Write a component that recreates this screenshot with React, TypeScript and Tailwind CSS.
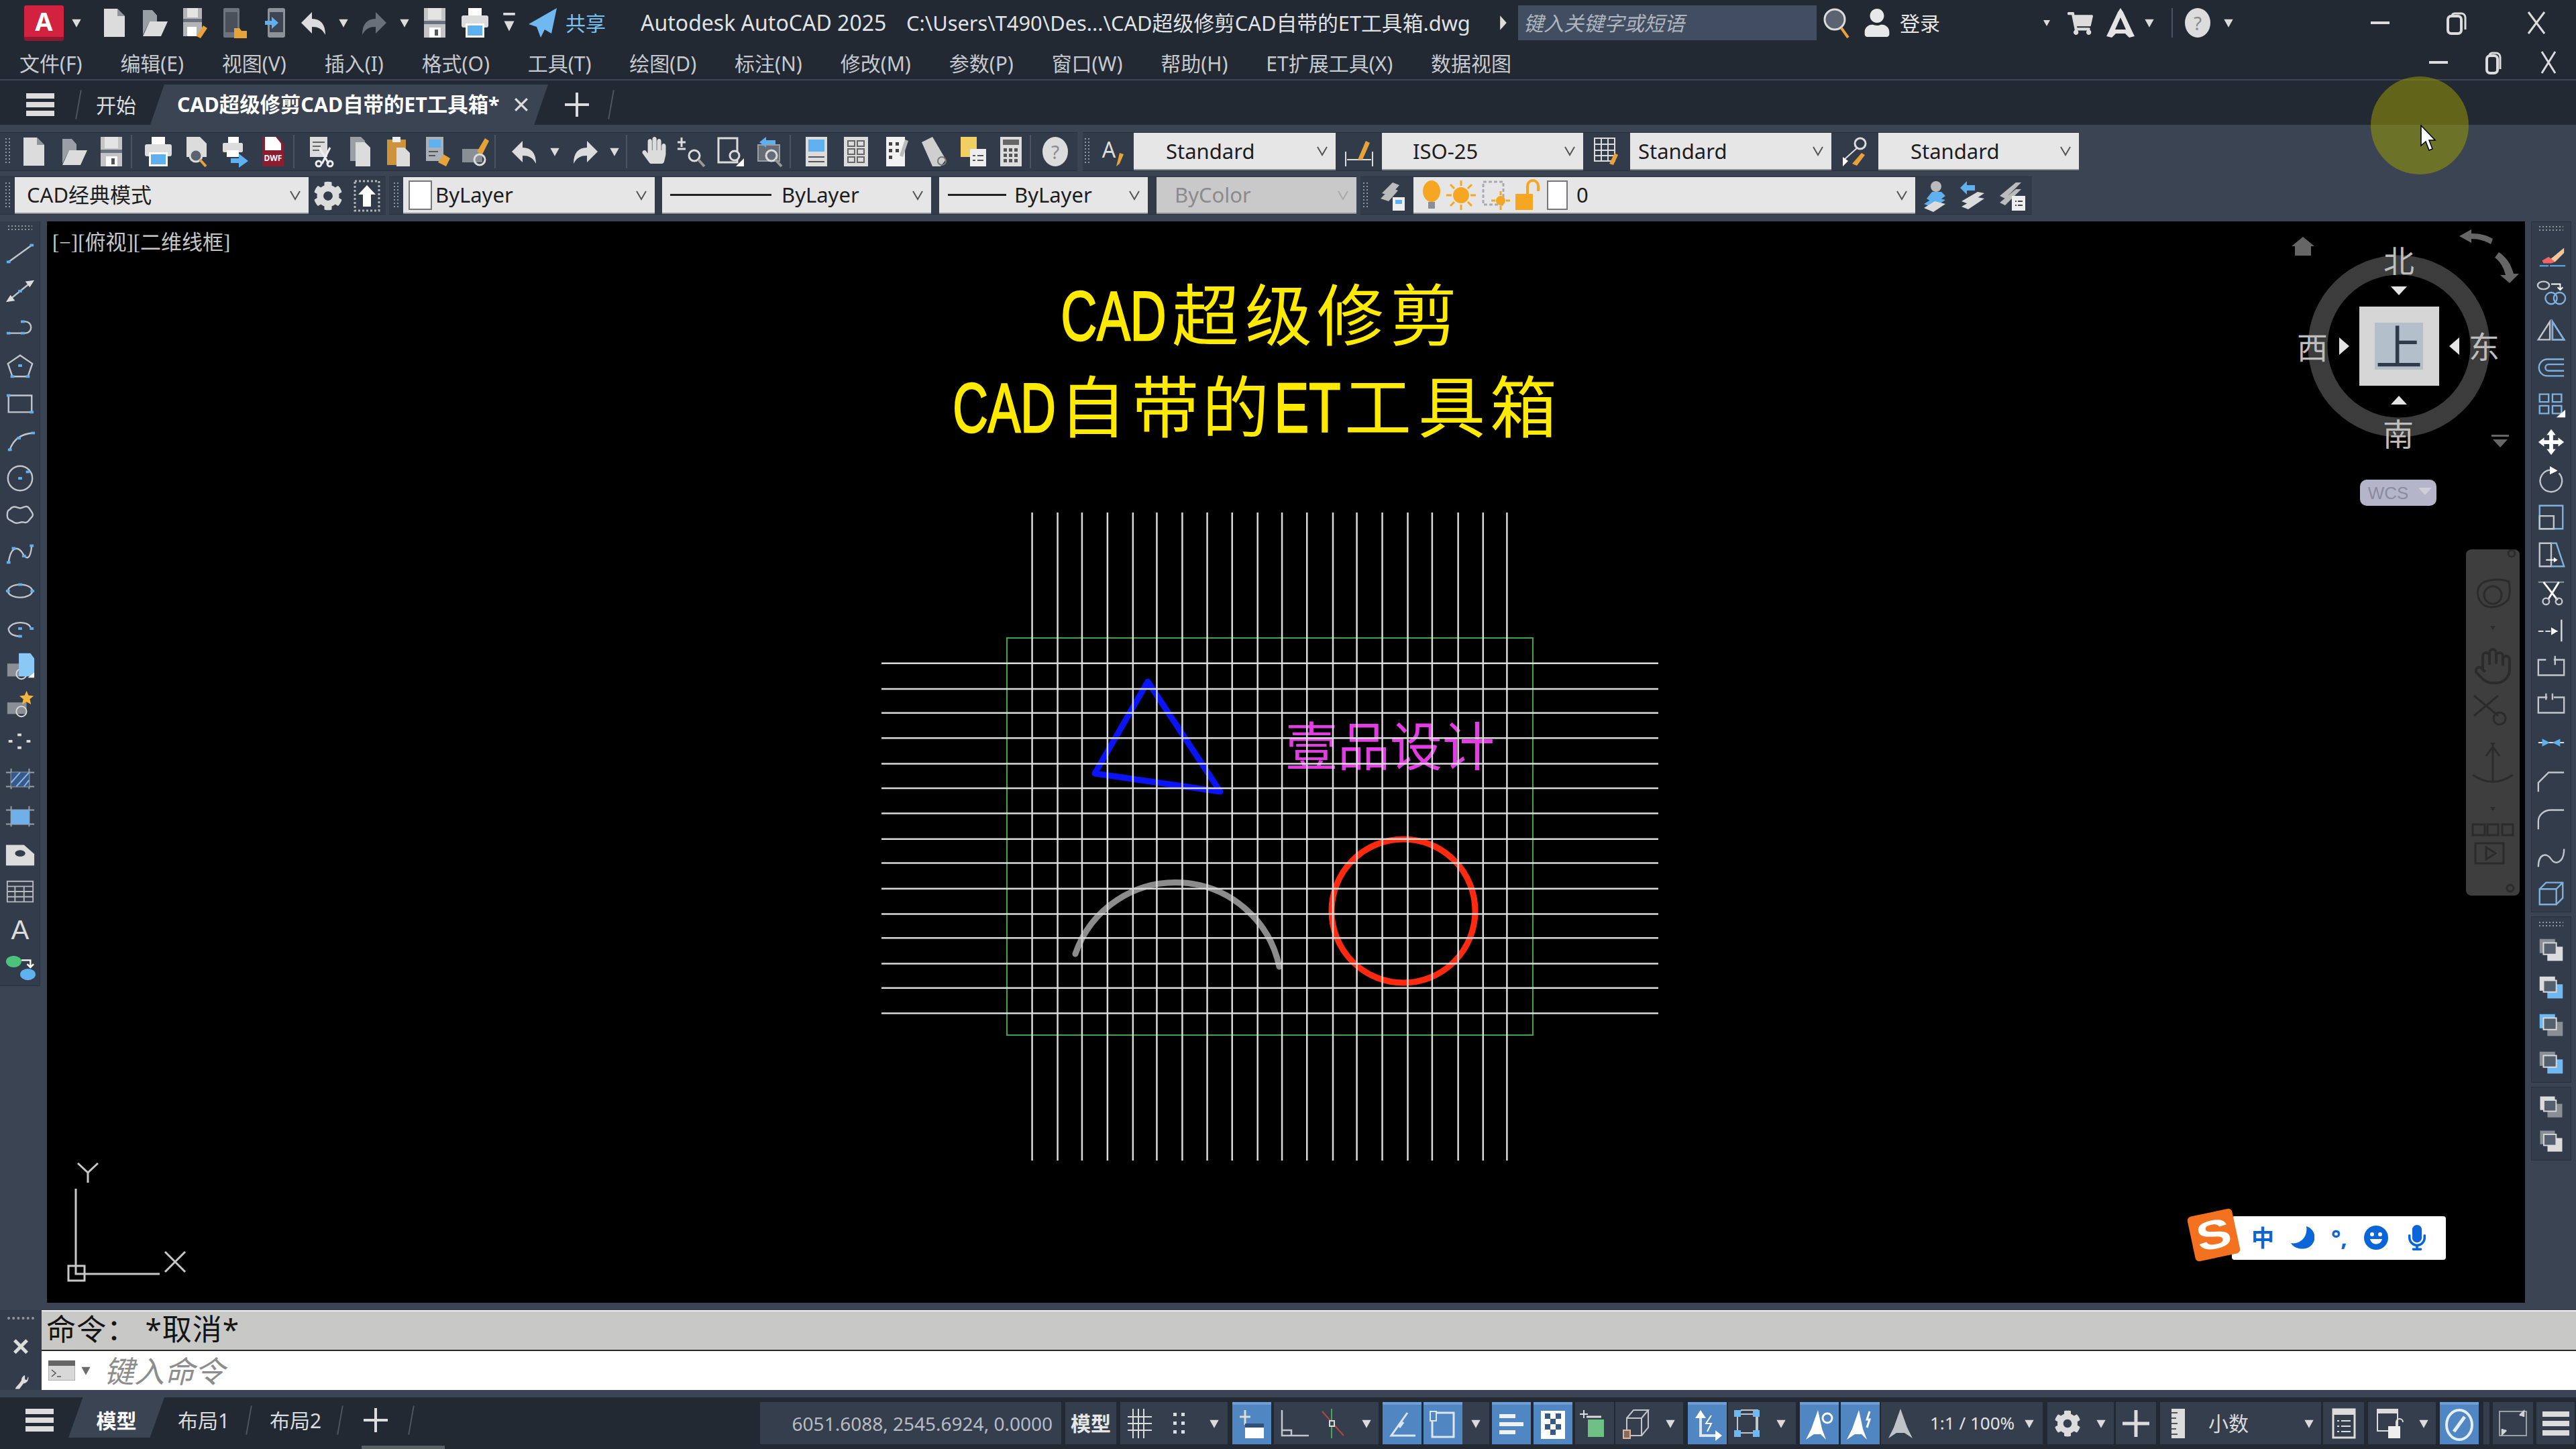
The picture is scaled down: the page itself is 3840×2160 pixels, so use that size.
import type { ReactNode } from "react";
import { Hand } from "lucide-react";
import { FaCog, FaHandPaper, FaMicrophone, FaShoppingCart, FaUser } from "react-icons/fa";

const G = "#dcdcdc";
const M = "#9a9fa6";
const B = "#5fb0ee";
const O = "#e8a23a";
const L = "#c2c6cb";

function Ic({ children, s = "w-[48px] h-[48px]" }: { children: ReactNode; s?: string }) {
  return (
    <svg viewBox="0 0 48 48" className={`${s} shrink-0`}>
      {children}
    </svg>
  );
}

function C({ i, w = "w-[58px]", cls = "" }: { i?: ReactNode; w?: string; cls?: string }) {
  return <div className={`flex items-center justify-center shrink-0 h-full ${w} ${cls}`}>{i && <Ic>{i}</Ic>}</div>;
}

function Tri({ w = "w-[30px]", cls = "" }: { w?: string; cls?: string }) {
  return (
    <div className={`flex items-center justify-center shrink-0 h-full ${w} ${cls}`}>
      <svg viewBox="0 0 12 12" className="w-[16px] h-[16px]">
        <path d="M1 2h10L6 11z" fill={G} />
      </svg>
    </div>
  );
}

function Sep() {
  return <div className="w-[2px] h-[50px] bg-[#4a5362] shrink-0" />;
}

function Slash({ cls = "" }: { cls?: string }) {
  return <div className={`w-[2px] h-[44px] bg-[#4d5562] rotate-[10deg] shrink-0 ${cls}`} />;
}

function Burger() {
  return (
    <svg viewBox="0 0 42 34" className="w-[42px] h-[34px]">
      <path d="M0 0h42v8H0zM0 13h42v8H0zM0 26h42v8H0z" fill={G} />
    </svg>
  );
}

function Grip() {
  return (
    <svg viewBox="0 0 8 40" className="w-[8px] h-[40px] shrink-0">
      <path d="M1 0v40M6 0v40" stroke="#9097a1" strokeWidth="2" strokeDasharray="2 3" />
    </svg>
  );
}

function HGrip() {
  return (
    <div className="h-[22px] flex items-center">
      <svg viewBox="0 0 36 8" className="w-[36px] h-[8px]">
        <path d="M0 1h36M0 6h36" stroke="#9097a1" strokeWidth="2" strokeDasharray="2 3" />
      </svg>
    </div>
  );
}

function Chev({ c = "#555" }: { c?: string }) {
  return (
    <svg viewBox="0 0 20 20" className="w-[20px] h-[20px] shrink-0">
      <path d="M3 4l7 12 7-12" stroke={c} strokeWidth="2" fill="none" />
    </svg>
  );
}

const dot = (x: number, y: number) => <rect key={`${x}-${y}`} x={x - 3} y={y - 2} width="6" height="4" fill={B} />;

// top toolbar icons
const I = {
  newDoc: (<><path d="M9 3h20l11 11v31H9z" fill={G} /><path d="M29 3v11h11z" fill="#8f949b" /></>),
  open: (<><path d="M9 42V5h14l7 8v9H19z" fill={M} /><path d="M9 44l10-22h27L36 44z" fill={G} /></>),
  save: (<><rect x="8" y="2" width="32" height="44" fill="#c4c4c4" /><rect x="14" y="2" width="20" height="17" fill="#e4e4e4" /><rect x="8" y="21" width="32" height="5" fill="#6a7280" /><rect x="16" y="31" width="17" height="15" fill="#fff" /><rect x="24" y="34" width="5" height="9" fill="#555" /></>),
  saveAs: (<><rect x="8" y="2" width="28" height="42" fill="#b4b4b4" /><rect x="14" y="2" width="16" height="14" fill="#e4e4e4" /><rect x="8" y="18" width="28" height="5" fill="#6a7280" /><rect x="14" y="30" width="14" height="14" fill="#fff" /><path d="M28 44l10-16 6 4-10 15z" fill={O} /></>),
  fromWeb: (<><rect x="10" y="2" width="24" height="44" rx="2" fill="#6e747d" /><rect x="13" y="8" width="18" height="30" fill="#4a505a" /><path d="M26 32h8l3 4h8v11H26z" fill={O} /></>),
  toWeb: (<><rect x="12" y="2" width="26" height="44" rx="3" fill="#8d929a" /><rect x="15" y="8" width="20" height="30" fill="#3d4552" /><path d="M8 21h10v-6l10 9-10 9v-6H8z" fill={B} /></>),
  undo: (<path d="M20 8L4 24l16 16V30c10 0 15 3 20 12 0-16-7-24-20-24z" fill={G} />),
  undoDim: (<path d="M28 8l16 16-16 16V30C18 30 13 33 8 42c0-16 7-24 20-24z" fill="#6a707a" />),
  redo: (<path d="M28 8l16 16-16 16V30C18 30 13 33 8 42c0-16 7-24 20-24z" fill={G} />),
  print: (<><rect x="14" y="2" width="20" height="12" fill="#fff" /><rect x="4" y="13" width="40" height="18" rx="3" fill={G} /><rect x="10" y="25" width="28" height="21" fill="#fff" /><rect x="13" y="28" width="22" height="15" fill={B} /></>),
  preview: (<><path d="M8 2h20l10 10v20H8z" fill={G} /><circle cx="22" cy="30" r="9" fill="#5b6370" stroke={G} strokeWidth="3" /><path d="M28 36l9 10" stroke={O} strokeWidth="4" /></>),
  publish: (<><rect x="14" y="2" width="16" height="10" fill="#fff" /><rect x="6" y="11" width="30" height="14" rx="2" fill={G} /><rect x="12" y="22" width="18" height="10" fill="#fff" /><path d="M18 34h12v-7l14 11-14 10v-7H18z" fill={B} /></>),
  dwf: (<><path d="M8 2h22l10 10v34H8z" fill="#8c1c30" /><path d="M12 2h16l8 10v10H12z" fill="#fff" /><text x="24" y="38" fontSize="12" fontWeight="700" textAnchor="middle" fill="#fff">DWF</text></>),
  cut: (<><path d="M8 2h26v30H8z" fill={G} /><path d="M12 10h18M12 16h12M12 22h10" stroke="#666" strokeWidth="2" /><path d="M22 18l14 24M38 18L26 42" stroke="#eee" strokeWidth="3" /><circle cx="21" cy="42" r="4" fill="none" stroke="#eee" strokeWidth="3" /><circle cx="38" cy="42" r="4" fill="none" stroke="#eee" strokeWidth="3" /></>),
  copy: (<><path d="M10 2h16l6 6v30H10z" fill={M} /><path d="M18 10h14l8 8v28H18z" fill={G} /></>),
  paste: (<><rect x="8" y="6" width="28" height="38" fill={O} opacity=".85" /><rect x="16" y="2" width="12" height="8" fill="#eee" /><path d="M22 18h12l8 8v20H22z" fill={G} /></>),
  match: (<><rect x="8" y="2" width="26" height="36" fill="#aab0b8" /><rect x="12" y="6" width="18" height="12" fill={B} /><path d="M12 24h14M12 30h10" stroke="#555" strokeWidth="2" /><path d="M26 40l8-12 10 6-6 12z" fill={O} /></>),
  brush: (<><rect x="4" y="20" width="30" height="20" fill="#8a8f96" /><circle cx="30" cy="36" r="8" fill="none" stroke={G} strokeWidth="3" /><path d="M26 24L38 4l6 4-10 20z" fill={O} /></>),
  hand: <FaHandPaper x="4" y="2" size={40} color={G} />,
  zoomR: (<><path d="M8 3v14M2 10h12M2 20h12" stroke={G} strokeWidth="3" /><circle cx="27" cy="30" r="8" fill="none" stroke={G} strokeWidth="3" /><path d="M33 36l9 10" stroke="#999" strokeWidth="4" /></>),
  zoomW: (<><path d="M6 4h28v36H6z" fill="none" stroke={G} strokeWidth="3" /><circle cx="30" cy="30" r="7" fill="#3b4453" stroke={G} strokeWidth="3" /><path d="M32 46l12-12v12z" fill="#fff" /></>),
  zoomP: (<><path d="M6 14h32v24H6z" fill="#666c75" stroke={M} strokeWidth="2" /><path d="M8 10l10-8v5h14v6H18v5z" fill={B} /><circle cx="26" cy="30" r="8" fill="none" stroke={G} strokeWidth="3" /><path d="M32 36l9 10" stroke="#999" strokeWidth="4" /></>),
  props: (<><rect x="8" y="2" width="32" height="44" fill={G} /><rect x="12" y="6" width="24" height="18" fill={B} /><path d="M12 32h24M12 39h24" stroke="#555" strokeWidth="2" /></>),
  dc: (<><rect x="6" y="2" width="36" height="44" fill={G} /><path d="M12 8h10v8H12zM26 8h10v8H26zM12 20h10v8H12zM26 20h10v8H26zM12 32h10v8H12zM26 32h10v8H26z" fill="none" stroke="#666" strokeWidth="2" /></>),
  palette: (<><rect x="10" y="2" width="28" height="44" fill="#f2f2f2" /><path d="M14 10h5v5h-5zM24 10h5v5h-5zM14 20h5v5h-5zM24 20h5v5h-5zM14 30h5v5h-5z" fill="#444" /><path d="M30 30l8-24 5 2-8 24z" fill="#bbb" /></>),
  sheet: (<><path d="M6 10L22 2l20 34-8 10H22z" fill="#cfcfcf" /><circle cx="36" cy="38" r="6" fill="none" stroke="#777" strokeWidth="2" /></>),
  markup: (<><rect x="6" y="2" width="24" height="30" fill="#f2cf63" /><rect x="20" y="20" width="24" height="26" fill="#eee" /><path d="M24 30h4M24 37h4M31 30h9M31 37h9" stroke="#555" strokeWidth="2" /></>),
  calc: (<><rect x="8" y="2" width="32" height="44" fill={G} /><rect x="12" y="6" width="24" height="8" fill="#666" /><path d="M13 19h5v5h-5zM21 19h5v5h-5zM29 19h5v5h-5zM13 27h5v5h-5zM21 27h5v5h-5zM29 27h5v5h-5zM13 35h5v5h-5zM21 35h5v5h-5zM29 35h5v5h-5z" fill="#555" /></>),
  help: (<><ellipse cx="24" cy="24" rx="19" ry="22" fill={G} /><text x="24" y="35" fontSize="28" textAnchor="middle" fill="#8a8a8a">?</text></>),
  aStyle: (<><text x="18" y="33" fontSize="32" fill={G} textAnchor="middle">A</text><path d="M34 26l6 2-6 14-5 4z" fill={O} /></>),
  dimStyle: (<><path d="M4 24v22M44 24v22M6 36h36" stroke={G} strokeWidth="2" /><path d="M22 36L34 8l6 3-11 25z" fill={O} /></>),
  tableStyle: (<><path d="M6 4h30v34H6zM6 13h30M6 22h30M6 30h30M16 4v34M26 4v34" fill="none" stroke={G} strokeWidth="2" /><path d="M28 42l8-16 5 3-7 15z" fill={O} /></>),
  mleader: (<><circle cx="32" cy="12" r="8" fill="none" stroke={G} strokeWidth="3" /><path d="M28 18L8 36" stroke={G} strokeWidth="2" /><path d="M6 32l8 6-8 8z" fill="#fff" /><path d="M20 42l14-16 5 3-12 16z" fill={O} /></>),
  gear: <FaCog x="2" y="2" size={44} color={G} />,
  wsp: (<><rect x="6" y="2" width="36" height="44" fill="none" stroke="#b0b4ba" strokeWidth="3" strokeDasharray="3 3" /><path d="M24 8l13 14h-7v18H18V22h-7z" fill="#fff" /></>),
  layerProps: (<><path d="M8 20L24 4l10 4-14 16zM6 28L22 12l10 4-14 16z" fill="#bbb" /><rect x="24" y="26" width="18" height="20" fill="#eee" /><rect x="28" y="30" width="10" height="6" fill={B} /></>),
  bulb: (<><ellipse cx="24" cy="18" rx="13" ry="16" fill="#f5a623" /><rect x="19" y="34" width="10" height="10" fill="#8a8f96" /></>),
  sun: (<><circle cx="24" cy="24" r="12" fill="#f5a623" /><path d="M24 2v8M24 38v8M2 24h8M38 24h8M8 8l6 6M34 34l6 6M40 8l-6 6M14 34l-6 6" stroke="#f5a623" strokeWidth="3" /></>),
  vpSun: (<><path d="M6 4h30v34H6z" fill="none" stroke="#a7abb1" strokeWidth="3" strokeDasharray="5 3" /><circle cx="32" cy="32" r="7" fill="#f5a623" /><path d="M32 18v6M32 40v6M18 32h6M40 32h6" stroke="#f5a623" strokeWidth="3" /></>),
  lock: (<><rect x="6" y="22" width="26" height="24" fill="#f5a623" /><path d="M24 22V10a8 8 0 0 1 16 0v8" fill="none" stroke="#f5a623" strokeWidth="4" /></>),
  layerMan: (<><circle cx="26" cy="10" r="8" fill="#bbb" /><path d="M12 28l8-10h14l6 6-16 12zM8 36l16-10 16 4-18 12z" fill={B} /><path d="M8 42l16-10 16 4-18 12z" fill={G} /></>),
  layerPrev: (<><path d="M6 32l24-14 10 2-24 16zM6 40l24-14 10 2-24 16z" fill={G} /><path d="M4 12L14 2v6h12v8H14v6z" fill={B} /></>),
  layerState: (<><path d="M6 24L30 4h8L14 28zM6 34L30 14h8L14 38z" fill="#bbb" /><rect x="24" y="24" width="20" height="22" fill="#eee" /><path d="M29 32h2M29 38h2M33 32h7M33 38h7" stroke="#444" strokeWidth="2" /></>),
};

// left toolbar
const ln = { stroke: L, strokeWidth: 2.5, fill: "none" };
const left: ReactNode[] = [
  <><path d="M6 38L42 12" {...ln} />{dot(6, 38)}{dot(42, 12)}</>,
  <><path d="M8 38L40 12" {...ln} /><path d="M2 42l14-2-7-9zM46 8l-14 2 7 9z" fill={G} />{dot(24, 25)}</>,
  <><path d="M6 32H32a9 9 0 0 0 0-18h-4" {...ln} />{dot(6, 32)}{dot(28, 32)}{dot(28, 14)}</>,
  <><path d="M24 8l19 13-7 20H12L5 21z" {...ln} />{dot(24, 24)}{dot(12, 41)}{dot(36, 41)}</>,
  <><path d="M6 12h36v26H6z" {...ln} />{dot(6, 12)}{dot(42, 38)}</>,
  <><path d="M8 38Q16 14 44 12" {...ln} />{dot(8, 38)}{dot(22, 20)}{dot(44, 12)}</>,
  <><circle cx="24" cy="24" r="19" {...ln} />{dot(24, 24)}{dot(36, 14)}</>,
  <path d="M8 14c6-8 12-2 16-2s10-6 14 0 8 10 4 14-6 10-12 8-10 4-16 0-10-4-10-10 0-8 4-10z" {...ln} />,
  <><path d="M6 38C10 10 22 14 28 24s12 10 14-12" {...ln} />{dot(6, 38)}{dot(14, 16)}{dot(30, 28)}{dot(42, 12)}</>,
  <><ellipse cx="24" cy="24" rx="19" ry="10" {...ln} />{dot(5, 24)}{dot(24, 14)}{dot(43, 24)}</>,
  <><path d="M40 22c-4-10-28-10-34 2 0 10 12 12 18 12" {...ln} />{dot(24, 24)}{dot(24, 36)}{dot(42, 24)}</>,
  <><rect x="4" y="20" width="30" height="20" fill="#8a8f96" /><circle cx="26" cy="36" r="8" fill="none" stroke={G} strokeWidth="2" /><path d="M22 4h18l6 8v28H22z" fill="#8cc8f6" /><path d="M46 34v8H36z" fill="#fff" /></>,
  <><rect x="4" y="22" width="30" height="18" fill="#8a8f96" /><circle cx="26" cy="36" r="8" fill="none" stroke={G} strokeWidth="2" /><path d="M34 4l3 7 8 1-6 5 2 8-7-4-7 4 2-8-6-5 8-1z" fill="#f5b63f" /></>,
  <><rect x="20" y="12" width="6" height="4" fill={G} /><rect x="6" y="22" width="6" height="4" fill={G} /><rect x="34" y="22" width="6" height="4" fill={G} /><rect x="20" y="32" width="6" height="4" fill={G} /></>,
  <><path d="M10 8v32M38 8v32M2 14h44M2 36h44" stroke="#9aa0a8" strokeWidth="2" /><rect x="10" y="14" width="28" height="22" fill="#36598a" /><path d="M10 30l14-16M18 36l20-22M30 36l8-10" stroke="#8cb8e6" strokeWidth="2" /></>,
  <><path d="M10 8v32M38 8v32M2 14h44M2 36h44" stroke="#9aa0a8" strokeWidth="2" /><rect x="10" y="14" width="28" height="22" fill="#6fb0ea" /></>,
  <path fillRule="evenodd" d="M2 10h28l16 14v18H2zM24 18a8 5 0 1 0 .1 0z" fill={G} />,
  <path d="M4 8h40v32H4zM4 16h40M4 24h40M4 32h40M16 16v24M30 16v24" fill="none" stroke="#b6b9bd" strokeWidth="2" />,
  <text x="24" y="40" fontSize="42" textAnchor="middle" fill={G} fontFamily="Liberation Sans">A</text>,
  <><ellipse cx="14" cy="16" rx="12" ry="9" fill="#4dc27a" /><ellipse cx="36" cy="36" rx="12" ry="9" fill={B} /><path d="M26 14h14v10M35 20l5 5 5-5" stroke="#fff" strokeWidth="2.5" fill="none" /></>,
];

// right toolbar
const bl = { stroke: "#7fb1dc", strokeWidth: 2.5, fill: "none" };
const right: ReactNode[] = [
  <><path d="M20 34L44 14v8L30 36z" fill="#f5c69a" /><path d="M6 42h14M22 42h24" stroke={B} strokeWidth="2" /><path d="M10 34l10-6 10 8-6 2H12z" fill="#e66" /></>,
  <><ellipse cx="12" cy="14" rx="9" ry="6" {...ln} /><circle cx="24" cy="34" r="9" {...bl} /><circle cx="37" cy="34" r="9" {...bl} /><path d="M24 12h14v8M34 17l4 4 4-4" stroke="#fff" strokeWidth="2" fill="none" /></>,
  <><path d="M22 12L4 40h18zM26 12v28h18z" {...ln} /><path d="M26 12v28h18z" {...bl} /></>,
  <path d="M44 12H18a12 12 0 0 0 0 26h26M44 20H20a5 5 0 0 0 0 10h24" {...bl} />,
  <><path d="M6 8h14v12H6zM26 8h14v12H26zM6 26h14v12H6zM26 26h14v12H26z" {...bl} /><path d="M46 32v12H32z" fill="#fff" /></>,
  <path d="M24 4l7 9h-4v8h8v-4l9 7-9 7v-4h-8v8h4l-7 9-7-9h4v-8h-8v4l-9-7 9-7v4h8v-8h-4z" fill="#fff" />,
  <><path d="M36 14a17 17 0 1 1-14-5" {...ln} /><path d="M22 3l12 7-12 6z" fill="#fff" /></>,
  <><path d="M6 6h36v36H6z" {...bl} /><path d="M6 22h22v20H6z" {...ln} /></>,
  <><path d="M6 6h18v36H6z" {...ln} /><path d="M24 6h8l12 36H24" {...bl} /><path d="M16 32h16" stroke="#fff" strokeWidth="2" /><path d="M28 28l6 4-6 4z" fill="#fff" /></>,
  <><path d="M4 8h40" stroke="#8f96a0" strokeWidth="2" /><path d="M12 8l22 28M36 8L20 34" stroke="#fff" strokeWidth="3" /><circle cx="16" cy="38" r="5" {...ln} /><circle cx="36" cy="38" r="5" {...ln} /></>,
  <><path d="M4 26h30" stroke={G} strokeWidth="2" strokeDasharray="8 3" /><path d="M24 20l10 6-10 6z" fill="#fff" /><path d="M40 8v34" stroke={G} strokeWidth="2.5" /></>,
  <path d="M28 12h16v24H4V12h12M30 6v14" {...ln} />,
  <path d="M18 12H4v24h40V12H28M16 6v10M26 6v10" {...ln} />,
  <><path d="M4 24h40" stroke={G} strokeWidth="2" /><path d="M10 18l12 6-12 6zM38 18l-12 6 12 6z" fill={B} /></>,
  <path d="M4 42V28L20 12h24" {...ln} />,
  <path d="M4 42V30C4 20 12 12 24 12h20" {...ln} />,
  <path d="M4 42c0-22 14-22 20-12s20 6 20-16" {...ln} />,
  <><path d="M6 18h26v24H6zM6 18l10-10h26v24L32 42M32 18l10-10" {...bl} /></>,
];

function DrawOrder({ c1, c2 }: { c1: string; c2: string }) {
  return (
    <>
      <rect x="6" y="6" width="24" height="22" fill={c1} />
      <rect x="18" y="18" width="24" height="22" fill={c2} />
      <rect x="12" y="12" width="20" height="18" fill="#55606f" stroke={G} strokeWidth="2" />
    </>
  );
}

// status bar icons
const S = {
  grid: <path d="M14 2v44M22 2v44M30 2v44M6 14h36M6 24h36M6 34h36" stroke={G} strokeWidth="2" fill="none" />,
  snap: <path d="M14 8h5v5h-5zM26 8h5v5h-5zM14 21h5v5h-5zM26 21h5v5h-5zM14 34h5v5h-5zM26 34h5v5h-5z" fill={G} />,
  infer: (<><path d="M14 2v22M6 12h16" stroke={G} strokeWidth="3" /><rect x="14" y="22" width="28" height="22" fill="#fff" /><rect x="14" y="22" width="28" height="6" fill="#30507a" /></>),
  ortho: <path d="M8 4v38h40M8 34h14v8" stroke={L} strokeWidth="2.5" fill="none" />,
  polar: (<><path d="M8 6l32 36" stroke="#b0463c" strokeWidth="2" /><path d="M22 2v44" stroke="#4aa35a" strokeWidth="2" /><rect x="19" y="20" width="7" height="8" fill="#3b4453" stroke={G} strokeWidth="2" /></>),
  iso: <path d="M32 6L8 40h36M26 20l-6 8" stroke="#dce6f2" strokeWidth="3" fill="none" />,
  osnap: (<><path d="M8 6h32v36H8z" stroke="#dce6f2" strokeWidth="3" fill="none" /><rect x="5" y="4" width="9" height="14" fill="#5086c1" stroke="#dce6f2" strokeWidth="2" /></>),
  lw: <path d="M6 8h24v6H6zM6 20h36v6H6zM6 32h24v6H6z" fill="#eef2f6" />,
  trans: (<><rect x="6" y="3" width="36" height="42" fill="#fff" /><path d="M12 7h8v8h-8zM28 7h8v8h-8zM20 15h8v8h-8zM12 23h8v8h-8zM28 23h8v8h-8zM20 31h8v8h-8z" fill="#36598a" /></>),
  sel: (<><path d="M8 4v12M2 10h12" stroke={G} strokeWidth="2" /><path d="M12 14h22" stroke={G} strokeWidth="3" /><rect x="14" y="18" width="24" height="26" fill="#6fc084" /></>),
  cube: (<><path d="M10 16h22v26H10zM10 16l10-12h22L32 16M32 42l10-12V4" stroke={L} strokeWidth="2" fill="none" /><rect x="5" y="34" width="10" height="12" fill="#8a6a58" stroke="#d8b8a0" strokeWidth="2" /></>),
  ucs: (<><path d="M14 4v36h30" stroke="#dce6f2" strokeWidth="4" fill="none" /><path d="M6 14l8-12 8 12zM36 32l10 8-10 8z" fill="#fff" /><path d="M30 10l-8 12h8l-6 12" stroke="#fff" strokeWidth="2" fill="none" /></>),
  gizmo: (<><path d="M10 10h28v28H10z" stroke={L} strokeWidth="2" fill="none" /><path d="M10 10l6-6h24v30l-6 4" stroke={L} strokeWidth="2" fill="none" /><path d="M5 4h10v10H5zM33 4h10v10H33zM5 34h10v10H5zM33 34h10v10H33z" fill="#6fb8f2" /></>),
  annoA: (<><path d="M22 2L12 30l-8 16 12-8h10l8 8-6-16z" fill="#fff" /><circle cx="36" cy="14" r="7" fill="none" stroke="#fff" strokeWidth="3" /></>),
  annoB: (<><path d="M22 2L12 30l-8 16 12-8h10l8 8-6-16z" fill="#fff" /><path d="M38 4l-4 12h4l-4 12" stroke="#fff" strokeWidth="3" fill="none" /></>),
  annoC: <path d="M24 2L14 30 6 46l12-8h12l12 8-8-16z" fill="#bfc2c6" />,
  gear: <FaCog x="4" y="4" size={40} color={G} />,
  plus: <path d="M24 4v40M4 24h40" stroke={G} strokeWidth="5" />,
  ruler: (<><rect x="12" y="2" width="20" height="44" fill={G} /><path d="M12 8h9M12 16h7M12 24h9M12 32h7M12 40h9" stroke="#555" strokeWidth="2" /></>),
  panel: (<><rect x="8" y="3" width="32" height="42" fill="none" stroke={G} strokeWidth="3" /><rect x="8" y="3" width="32" height="8" fill={G} /><path d="M14 20h3M14 28h3M14 36h3M20 20h14M20 28h14M20 36h14" stroke={G} strokeWidth="2" /></>),
  lockUi: (<><rect x="6" y="3" width="30" height="32" fill="none" stroke={G} strokeWidth="2" /><rect x="6" y="3" width="30" height="6" fill={G} /><rect x="22" y="28" width="18" height="18" fill="#eee" /><path d="M34 28v-6a5 5 0 0 1 10 0" stroke={G} strokeWidth="2" fill="none" /></>),
  isolate: (<><ellipse cx="24" cy="24" rx="19" ry="22" fill="none" stroke="#e4eef8" strokeWidth="4" /><path d="M16 34L32 12" stroke="#e4eef8" strokeWidth="5" /></>),
  full: (<><rect x="4" y="6" width="40" height="36" fill="none" stroke={M} strokeWidth="2" /><path d="M14 34l-6 6v-8M34 12l6-6v8" stroke="#cfd3d8" strokeWidth="2.5" fill="#cfd3d8" /></>),
  burger: <path d="M4 6h40v8H4zM4 20h40v8H4zM4 34h40v8H4z" fill={G} />,
};

function Combo({ children, w, disabled }: { children: ReactNode; w: string; disabled?: boolean }) {
  return (
    <div className={`flex items-center h-full shrink-0 pr-[10px] border-b-2 border-[#8d9096] text-[31px] ${w} ${disabled ? "bg-[#c9c9c9] text-[#8b8b8b]" : "bg-[#e6e6e6] text-[#1d1d1d]"}`}>
      {children}
      <div className="ml-auto">
        <Chev c={disabled ? "#a9a9a9" : "#555"} />
      </div>
    </div>
  );
}

function Blue({ i, cls = "" }: { i: ReactNode; cls?: string }) {
  return (
    <div className={`flex items-center justify-center h-full w-[58px] bg-[#5086c1] border-t-4 border-[#6d9fd6] shrink-0 ${cls}`}>
      <Ic>{i}</Ic>
    </div>
  );
}

function Pn({ children, cls = "" }: { children?: ReactNode; cls?: string }) {
  return <div className={`flex items-center h-full bg-[#353e4d] shrink-0 ${cls}`}>{children}</div>;
}

function TitleBar() {
  return (
    <div className="flex items-center h-[68px] pl-[36px] shrink-0">
      <div className="relative w-[59px] h-[53px] shrink-0 bg-[#d3223f] rounded-[3px] flex items-center justify-center text-white text-[38px] font-bold border-b-[6px] border-[#8f1830]">A</div>
      <Tri w="w-[38px]" />
      <C i={I.newDoc} cls="ml-[8px]" />
      <C i={I.open} />
      <C i={I.saveAs} cls="ml-[3px]" />
      <C i={I.fromWeb} />
      <C i={I.toWeb} cls="ml-[6px]" />
      <C i={I.undo} />
      <Tri w="w-[28px]" />
      <C i={I.undoDim} w="w-[60px]" />
      <Tri w="w-[34px]" />
      <C i={I.save} w="w-[56px]" />
      <C i={I.print} cls="ml-[3px]" />
      <div className="flex items-center justify-center h-full w-[44px] shrink-0">
        <svg viewBox="0 0 14 24" className="w-[20px] h-[30px]">
          <path d="M0 0h14v3H0zM1 10h12L7 22z" fill={G} />
        </svg>
      </div>
      <C w="w-[58px]" i={<path d="M44 2L2 26l12 4 6 16 6-12 10 6z" fill="#6fb8f0" />} />
      <div className="ml-[4px] w-[60px] shrink-0 text-[30px] text-[#7cc0ee] whitespace-nowrap">共享</div>
      <div className="ml-[52px] w-[396px] shrink-0 text-[32px] text-[#dfe2e6] whitespace-nowrap">Autodesk AutoCAD 2025</div>
      <div className="w-[878px] shrink-0 text-[30.8px] text-[#dfe2e6] whitespace-nowrap">C:\Users\T490\Des...\CAD超级修剪CAD自带的ET工具箱.dwg</div>
      <div className="flex items-center justify-center w-[24px] shrink-0">
        <svg viewBox="0 0 10 20" className="w-[12px] h-[26px]">
          <path d="M1 1l8 9-8 9z" fill={G} />
        </svg>
      </div>
      <div className="ml-[10px] flex items-center w-[445px] h-[52px] pl-[8px] bg-[#414d60] text-[30px] italic text-[#aeb5be] shrink-0">键入关键字或短语</div>
      <C w="w-[62px]" i={<><circle cx="20" cy="19" r="15" fill="#5b6370" stroke={G} strokeWidth="3" /><path d="M30 32l10 14" stroke={O} strokeWidth="4" /></>} />
      <C w="w-[56px]" i={<FaUser x="3" y="3" size={42} color="#e8e8e8" />} />
      <div className="ml-[6px] w-[213px] shrink-0 text-[30px] text-[#e6e6e6]">登录</div>
      <Tri w="w-[12px]" />
      <C w="w-[90px]" i={<FaShoppingCart x="4" y="6" size={38} color={G} />} />
      <C w="w-[28px]" i={<path d="M24 2l-4 6L6 38l-3 6 8 2 6-6h14l6 6 8-2-3-6L28 8zM24 16l8 18H16z" fill="#e4e4e4" fillRule="evenodd" />} />
      <Tri w="w-[58px]" />
      <div className="ml-[4px] w-[2px] h-[44px] bg-[#4a5362] shrink-0" />
      <C w="w-[74px]" i={I.help} />
      <Tri w="w-[18px]" />
      <C w="w-[98px]" cls="ml-[168px]" i={<path d="M10 24h28" stroke={G} strokeWidth="4" />} />
      <C w="w-[132px]" i={<><path d="M16 14a4 4 0 0 1 4-4h10a6 6 0 0 1 6 6v18" stroke={G} strokeWidth="3" fill="none" /><rect x="10" y="14" width="20" height="26" rx="5" fill="none" stroke={G} strokeWidth="4" /></>} />
      <C w="w-[104px]" i={<path d="M12 8l24 32M36 8L12 40" stroke={G} strokeWidth="3" />} />
    </div>
  );
}

function MenuBar() {
  const items = ["文件(F)", "编辑(E)", "视图(V)", "插入(I)", "格式(O)", "工具(T)", "绘图(D)", "标注(N)", "修改(M)", "参数(P)", "窗口(W)", "帮助(H)", "ET扩展工具(X)", "数据视图"];
  return (
    <div className="flex items-center h-[52px] pl-[29px] gap-[56.8px] border-b-2 border-[#3e4653] shrink-0 text-[30px] text-[#c6cacf]">
      {items.map((m) => (
        <span key={m} className="whitespace-nowrap pt-[3px]">{m}</span>
      ))}
      <div className="ml-auto flex items-center h-full shrink-0">
        <C w="w-[82px]" i={<path d="M10 24h28" stroke={G} strokeWidth="4" />} />
        <C w="w-[82px]" i={<><path d="M18 14a4 4 0 0 1 4-4h6a6 6 0 0 1 6 6v18" stroke={G} strokeWidth="3" fill="none" /><rect x="14" y="14" width="16" height="26" rx="5" fill="none" stroke={G} strokeWidth="4" /></>} />
        <C w="w-[82px]" i={<path d="M14 8l20 32M34 8L14 40" stroke={G} strokeWidth="3" />} />
      </div>
    </div>
  );
}

function TabBar() {
  return (
    <div className="flex items-end h-[66px] shrink-0 text-[30px]">
      <div className="flex items-center justify-center h-[60px] w-[120px] shrink-0">
        <Burger />
      </div>
      <div className="flex items-center h-[60px] -ml-[4px]">
        <Slash />
      </div>
      <div className="flex items-center h-[60px] ml-[25px] w-[81px] shrink-0 text-[#d9dcdf]">开始</div>
      <div className="flex items-center h-[60px] w-[593px] pl-[40px] shrink-0 bg-[#3b4453] [clip-path:polygon(3.5%_0,100%_0,96.5%_100%,0_100%)] text-white font-bold">
        <span className="w-[482px] whitespace-nowrap text-[30.4px]">CAD超级修剪CAD自带的ET工具箱*</span>
        <svg viewBox="0 0 20 20" className="ml-[20px] w-[22px] h-[22px]">
          <path d="M2 2l16 16M18 2L2 18" stroke={G} strokeWidth="3" />
        </svg>
      </div>
      <div className="flex items-center justify-center h-[60px] w-[86px] shrink-0">
        <svg viewBox="0 0 36 36" className="w-[36px] h-[36px]">
          <path d="M18 0v36M0 18h36" stroke={G} strokeWidth="4" />
        </svg>
      </div>
      <div className="flex items-center h-[60px] ml-[7px]">
        <Slash />
      </div>
    </div>
  );
}

function Toolbars() {
  return (
    <div className="flex flex-col h-[144px] pt-[11px] gap-[8px] bg-[#3b4453] shrink-0">
      <div className="flex h-[58px] shrink-0">
        <div className="flex items-center h-full pl-[2px] w-[1606px] shrink-0 bg-[#323b49] border-t border-b border-[#2a313d]">
          <div className="w-[19px] flex justify-center"><Grip /></div>
          <C i={I.newDoc} />
          <C i={I.open} />
          <C i={I.save} />
          <Sep />
          <C i={I.print} cls="ml-[10px]" />
          <C i={I.preview} />
          <C i={I.publish} w="w-[54px]" />
          <C i={I.dwf} w="w-[60px]" />
          <Sep />
          <C i={I.cut} cls="ml-[10px]" />
          <C i={I.copy} />
          <C i={I.paste} w="w-[56px]" />
          <C i={I.match} w="w-[60px]" />
          <C i={I.brush} w="w-[56px]" />
          <Sep />
          <C i={I.undo} w="w-[56px]" cls="ml-[16px]" />
          <Tri w="w-[32px]" />
          <C i={I.redo} w="w-[56px]" />
          <Tri w="w-[34px]" />
          <Sep />
          <C i={I.hand} w="w-[57px]" cls="ml-[11px]" />
          <C i={I.zoomR} w="w-[57px]" />
          <C i={I.zoomW} />
          <C i={I.zoomP} w="w-[59px]" />
          <Sep />
          <C i={I.props} cls="ml-[9px]" />
          <C i={I.dc} w="w-[60px]" />
          <C i={I.palette} w="w-[57px]" />
          <C i={I.sheet} />
          <C i={I.markup} w="w-[57px]" />
          <C i={I.calc} w="w-[57px]" />
          <Sep />
          <C i={I.help} cls="ml-[7px]" />
        </div>
        <div className="flex items-center h-full ml-[8px] w-[1485px] shrink-0 bg-[#323b49] border-t border-b border-[#2a313d]">
          <div className="w-[14px] flex justify-center"><Grip /></div>
          <C i={I.aStyle} w="w-[62px]" />
          <Combo w="w-[301px]"><span className="ml-[48px]">Standard</span></Combo>
          <C i={I.dimStyle} w="w-[69px]" />
          <Combo w="w-[300px]"><span className="ml-[46px]">ISO-25</span></Combo>
          <C i={I.tableStyle} w="w-[70px]" />
          <Combo w="w-[300px]"><span className="ml-[12px]">Standard</span></Combo>
          <C i={I.mleader} w="w-[70px]" />
          <Combo w="w-[299px]"><span className="ml-[48px]">Standard</span></Combo>
        </div>
      </div>
      <div className="flex h-[57px] shrink-0">
        <div className="flex items-center h-full pl-[2px] w-[575px] shrink-0 bg-[#323b49] border-t border-b border-[#2a313d]">
          <div className="w-[20px] flex justify-center"><Grip /></div>
          <Combo w="w-[438px]"><span className="ml-[18px]">CAD经典模式</span></Combo>
          <C i={I.gear} />
          <C i={I.wsp} w="w-[57px]" />
        </div>
        <div className="flex items-center h-full ml-[5px] w-[1442px] shrink-0 bg-[#323b49] border-t border-b border-[#2a313d]">
          <div className="w-[21px] flex justify-center"><Grip /></div>
          <Combo w="w-[375px]">
            <div className="ml-[8px] w-[35px] h-[44px] bg-white border-2 border-[#777]" />
            <span className="ml-[5px]">ByLayer</span>
          </Combo>
          <div className="w-[11px] shrink-0" />
          <Combo w="w-[401px]">
            <div className="ml-[12px] w-[151px] h-[3px] bg-[#222]" />
            <span className="ml-[15px]">ByLayer</span>
          </Combo>
          <div className="w-[12px] shrink-0" />
          <Combo w="w-[311px]">
            <div className="ml-[13px] w-[87px] h-[3px] bg-[#222]" />
            <span className="ml-[12px]">ByLayer</span>
          </Combo>
          <div className="w-[13px] shrink-0" />
          <Combo w="w-[298px]" disabled><span className="ml-[27px]">ByColor</span></Combo>
        </div>
        <div className="flex items-center h-full ml-[6px] w-[1001px] shrink-0 bg-[#323b49] border-t border-b border-[#2a313d]">
          <div className="w-[16px] flex justify-center"><Grip /></div>
          <C i={I.layerProps} w="w-[63px]" />
          <Combo w="w-[748px]">
            <C i={I.bulb} w="w-[54px]" />
            <C i={I.sun} w="w-[33px]" />
            <C i={I.vpSun} w="w-[70px]" />
            <C i={I.lock} w="w-[26px]" />
            <div className="ml-[16px] w-[31px] h-[44px] bg-white border-2 border-[#777]" />
            <span className="ml-[13px]">0</span>
          </Combo>
          <C i={I.layerMan} />
          <C i={I.layerPrev} />
          <C i={I.layerState} w="w-[56px]" />
        </div>
      </div>
    </div>
  );
}

const vx = [327, 375, 421, 469, 517, 562, 610, 657, 704, 752, 798, 845, 894, 939, 987, 1035, 1081, 1130, 1177, 1222].map((d) => 1280 + d / 1.2645);
const hy = [390, 450, 506, 565, 625, 682, 741, 801, 857, 917, 976, 1032, 1092, 1149, 1208].map((d) => 740 + d / 1.568);

const titleChars: [string, number, number][] = [
  ["超", 1797, 507], ["级", 1906, 507], ["修", 2013, 507], ["剪", 2122, 507],
  ["自", 1629, 644], ["带", 1737, 644], ["的", 1842, 644],
  ["工", 2054, 644], ["具", 2164, 644], ["箱", 2271, 644],
];

function CanvasDrawing() {
  return (
    <svg viewBox="70 330 3694 1612" className="absolute inset-0 w-full h-full">
      {/* drawing */}
      <g fill="#ffea00" fontSize="100" textAnchor="middle">
        <g fontFamily="'Liberation Sans',sans-serif" fontSize="104" stroke="#ffea00" strokeWidth="2.5">
          <text transform="translate(1660 507) scale(0.715 1)">CAD</text>
          <text transform="translate(1497 644) scale(0.7 1)">CAD</text>
          <text transform="translate(1949 644) scale(0.744 1)">ET</text>
        </g>
        <g fontFamily="'Noto Sans CJK SC',sans-serif">
          {titleChars.map(([ch, x, y]) => (
            <text key={ch} x={x} y={y}>{ch}</text>
          ))}
        </g>
      </g>
      <text x="2072" y="1142" fontSize="78" fill="#e23de2" textAnchor="middle" fontFamily="'Noto Sans CJK SC',sans-serif">壹品设计</text>
      <path d="M1711 1016L1632 1153L1819 1180Z" fill="none" stroke="#0b14f5" strokeWidth="9" strokeLinejoin="round" />
      <path d="M1603 1422A158 158 0 0 1 1907 1441" fill="none" stroke="#8c8c8c" strokeWidth="9" strokeLinecap="round" />
      <ellipse cx="2092" cy="1358" rx="107" ry="107" fill="none" stroke="#ff2a10" strokeWidth="9" />
      <rect x="1501" y="951" width="784" height="592" fill="none" stroke="#3fa53f" strokeWidth="2" />
      {vx.map((x) => (
        <path key={x} d={`M${x} 764V1730`} stroke="#dadada" strokeWidth="2.5" />
      ))}
      {hy.map((y) => (
        <path key={y} d={`M1314 ${y}H2472`} stroke="#dadada" strokeWidth="2.5" />
      ))}
      {/* ucs */}
      <g stroke="#c8c8c8" strokeWidth="3" fill="none">
        <path d="M113 1772V1899H238" />
        <rect x="102" y="1887" width="24" height="22" />
        <path d="M246 1866L276 1896M276 1866L246 1896" />
        <path d="M116 1734L131 1748L146 1734M131 1748V1763" />
      </g>
      {/* view cube */}
      <circle cx="3576" cy="516" r="121" fill="none" stroke="#3c3c3c" strokeWidth="29" />
      <rect x="3517" y="457" width="119" height="118" fill="#d5d5d5" />
      <rect x="3540" y="481" width="72" height="70" fill="#b4bfcc" />
      <g fontFamily="'Noto Sans CJK SC',sans-serif" textAnchor="middle">
        <text x="3576" y="544" fontSize="70" fill="#2f3a4a">上</text>
        <g fontSize="46" fill="#bdbdbd">
          <text x="3576" y="406">北</text>
          <text x="3575" y="664">南</text>
          <text x="3447" y="535">西</text>
          <text x="3703" y="534">东</text>
        </g>
      </g>
      <path d="M3564 427h24l-12 13zM3564 603h24l-12-13zM3487 503v26l15-13zM3666 503v26l-15-13z" fill="#e4e4e4" />
      <path d="M3416 367l17-14 17 14h-5v14h-24v-14z" fill="#666" />
      <path d="M3666 352l18-10v6c14 0 24 3 32 8l-3 8c-8-5-18-8-29-8v6zM3725 376c12 8 18 18 22 32l8 0-14 14-14-12h8c-3-12-8-20-16-26z" fill="#666" />
      <path d="M3714 648h26v3h-26zM3716 655h22l-11 12z" fill="#666" />
      <rect x="3518" y="715" width="114" height="39" rx="10" fill="#b5b5c9" />
      <text x="3560" y="744" fontSize="26" fill="#8a8ca0" textAnchor="middle" fontFamily="'Liberation Sans',sans-serif">WCS</text>
      <path d="M3605 727h20l-10 11z" fill="#cfcfdc" />
    </svg>
  );
}

function NavBar() {
  return (
    <div className="absolute left-[3606px] top-[489px] w-[80px] h-[516px] bg-[#3e3e3e] rounded-[8px]">
      <svg viewBox="0 0 80 516" className="w-full h-full">
        <g fill="none" stroke="#2b2b2b" strokeWidth="3">
          <circle cx="68" cy="6" r="5" />
          <circle cx="66" cy="505" r="5" />
          <path d="M64 48c-10-4-24-4-36 0-16 8-12 28 0 36 10 4 24 2 34-8 4-6 4-18 2-28z" />
          <circle cx="40" cy="68" r="13" />
          <Hand x="8" y="144" width="64" height="60" color="#2b2b2b" strokeWidth="1.6" />
          <path d="M12 218L48 248M48 218L12 248" />
          <circle cx="50" cy="252" r="9" />
          <path d="M40 296v52M30 308l10-14 10 14M10 336c20 14 40 14 60 0" />
          <path d="M10 410h18v16H10zM32 410h16v16H32zM54 410h16v16H54zM14 438h42v30H14zM30 444l14 9-14 9z" />
        </g>
        <path d="M36 114h8l-4 6zM36 288h8l-4 6zM36 384h8l-4 6z" fill="#2b2b2b" />
      </svg>
    </div>
  );
}

function Sogou() {
  return (
    <div className="absolute left-[3196px] top-[1473px] w-[380px] h-[76px] flex items-center">
      <div className="absolute left-[61px] top-[10px] w-[319px] h-[65px] rounded-[4px] bg-white" />
      <div className="relative w-[68px] h-[68px] shrink-0 bg-[#f47120] rounded-[6px] rotate-[-12deg] flex items-center justify-center text-white text-[60px] font-bold font-['Liberation_Sans',sans-serif] leading-none">
        <span className="scale-x-[1.3]">S</span>
      </div>
      <div className="relative flex items-center justify-between text-[#0a66d8] ml-[22px] w-[266px] mt-[8px]">
        <span className="text-[34px] font-bold leading-none">中</span>
        <svg viewBox="0 0 36 36" className="w-[36px] h-[36px]">
          <path d="M24 1a17 17 0 0 1-1 33c-8 2-18-1-22-8 12 3 26-8 23-25z" fill="#0a66d8" />
        </svg>
        <span className="text-[34px] font-bold leading-none">°,</span>
        <svg viewBox="0 0 36 36" className="w-[36px] h-[36px]">
          <circle cx="18" cy="18" r="18" fill="#0a66d8" />
          <circle cx="12" cy="13" r="3" fill="#fff" />
          <circle cx="24" cy="13" r="3" fill="#fff" />
          <path d="M9 20h18c-2 10-16 10-18 0z" fill="#fff" />
        </svg>
        <FaMicrophone size={38} color="#0a66d8" />
      </div>
    </div>
  );
}

function Middle() {
  return (
    <div className="flex h-[1612px] shrink-0 bg-[#3b4453]">
      <div className="w-[70px] shrink-0">
        <div className="flex flex-col items-center w-[60px] h-[1140px] bg-[#333c4a] border-r border-b border-[#2a313d]">
          <HGrip />
          {left.map((ic, n) => (
            <div key={n} className="flex items-center justify-center h-[56px] shrink-0"><Ic s="w-[46px] h-[46px]">{ic}</Ic></div>
          ))}
        </div>
      </div>
      <div className="relative w-[3694px] shrink-0 bg-black">
        <CanvasDrawing />
        <div className="absolute left-[8px] top-[14px] text-[31px] leading-[36px] text-[#c8c8c8] font-['Liberation_Serif','Noto_Sans_CJK_SC',serif]">[−][俯视][二维线框]</div>
        <NavBar />
        <Sogou />
      </div>
      <div className="w-[76px] shrink-0 pl-[9px] flex flex-col">
        <div className="flex flex-col items-center w-[60px] h-[1030px] bg-[#333c4a] border border-[#2a313d] shrink-0">
          <HGrip />
          {right.map((ic, n) => (
            <div key={n} className="flex items-center justify-center h-[56px] shrink-0"><Ic s="w-[46px] h-[46px]">{ic}</Ic></div>
          ))}
        </div>
        <div className="flex flex-col items-center w-[60px] h-[248px] mt-[6px] bg-[#333c4a] border border-[#2a313d] shrink-0">
          <HGrip />
          <div className="flex items-center justify-center h-[56px]"><Ic s="w-[46px] h-[46px]"><DrawOrder c1="#8a8f96" c2="#dcdcdc" /></Ic></div>
          <div className="flex items-center justify-center h-[56px]"><Ic s="w-[46px] h-[46px]"><DrawOrder c1="#dcdcdc" c2="#6fb8f2" /></Ic></div>
          <div className="flex items-center justify-center h-[56px]"><Ic s="w-[46px] h-[46px]"><DrawOrder c1="#6fb8f2" c2="#8a8f96" /></Ic></div>
          <div className="flex items-center justify-center h-[56px]"><Ic s="w-[46px] h-[46px]"><DrawOrder c1="#8a8f96" c2="#6fb8f2" /></Ic></div>
        </div>
        <div className="flex flex-col items-center w-[60px] h-[110px] mt-[6px] bg-[#333c4a] border border-[#2a313d] shrink-0">
          <div className="flex items-center justify-center h-[52px] mt-[4px]"><Ic s="w-[44px] h-[44px]"><DrawOrder c1="#dcdcdc" c2="#8a8f96" /></Ic></div>
          <div className="flex items-center justify-center h-[50px]"><Ic s="w-[44px] h-[44px]"><DrawOrder c1="#8a8f96" c2="#dcdcdc" /></Ic></div>
        </div>
      </div>
    </div>
  );
}

function CommandLine() {
  return (
    <div className="flex h-[119px] shrink-0 bg-[#333c4a]">
      <div className="flex flex-col items-center w-[62px] shrink-0">
        <div className="mt-[10px] w-[40px] h-[4px] border-t-4 border-dotted border-[#9097a1]" />
        <svg viewBox="0 0 24 24" className="mt-[28px] w-[26px] h-[26px]">
          <path d="M3 3l18 18M21 3L3 21" stroke={G} strokeWidth="5" />
        </svg>
        <svg viewBox="0 0 24 24" className="mt-[28px] w-[26px] h-[26px]">
          <path d="M4 22c0-3 8-9 9-13 0-3 2-6 5-7v6l3 1c1-3 1-4 2-5 1 6-3 10-7 10l-6 8z" fill={G} />
        </svg>
      </div>
      <div className="flex flex-col flex-1 min-w-0">
        <div className="flex items-center h-[59px] pl-[7px] pb-[6px] bg-[#c8c8c6] border-t-2 border-[#f0f0f0] text-[44px] leading-none tracking-[1px] text-[#141414]">命令： *取消*</div>
        <div className="h-[2px] bg-[#2a2a2a]" />
        <div className="flex items-center h-[58px] bg-white">
          <svg viewBox="0 0 40 30" className="ml-[10px] w-[40px] h-[30px]">
            <rect width="40" height="30" fill="#d8d8d8" stroke="#888" />
            <rect width="40" height="8" fill="#666" />
            <path d="M5 14l6 5-6 5M13 24h6" stroke="#555" strokeWidth="1.5" fill="none" />
          </svg>
          <svg viewBox="0 0 12 12" className="ml-[8px] w-[16px] h-[16px]">
            <path d="M1 2h10L6 11z" fill="#6b6b6b" />
          </svg>
          <span className="ml-[19px] text-[45px] leading-none italic text-[#8d8d8d]">键入命令</span>
        </div>
      </div>
    </div>
  );
}

function StatusBar() {
  return (
    <div className="relative flex items-center h-[77px] shrink-0 bg-[#222933] text-[30px]">
      <div className="flex items-center justify-center w-[102px] h-[68px] self-start shrink-0 pl-[16px]"><Burger /></div>
      <div className="flex items-center justify-center w-[143px] h-[60px] self-start pt-[8px] shrink-0 bg-[#3b4453] [clip-path:polygon(15%_0,100%_0,85%_100%,0_100%)] font-bold text-white">模型</div>
      <div className="flex items-center self-start h-[68px] shrink-0">
        <span className="ml-[20px] w-[73px] text-[#d9dcdf] whitespace-nowrap shrink-0">布局1</span>
        <Slash cls="ml-[32px]" />
        <span className="ml-[30px] w-[76px] text-[#d9dcdf] whitespace-nowrap shrink-0">布局2</span>
        <Slash cls="ml-[28px]" />
        <div className="flex items-center justify-center w-[104px] shrink-0">
          <svg viewBox="0 0 36 36" className="w-[36px] h-[36px]">
            <path d="M18 0v36M0 18h36" stroke={G} strokeWidth="4" />
          </svg>
        </div>
        <Slash />
      </div>
      <div className="flex items-center h-[63px] ml-[519px]">
        <Pn cls="w-[449px] justify-end pr-[13px] text-[#b7bcc4]"><span className="whitespace-nowrap text-[28px]">6051.6088, 2545.6924, 0.0000</span></Pn>
        <Pn cls="ml-[6px] w-[76px] justify-center font-bold text-[#e6e6e6]">模型</Pn>
        <Pn cls="ml-[6px] w-[160px]"><C i={S.grid} /><C i={S.snap} w="w-[62px]" /><Tri w="w-[40px]" /></Pn>
        <Blue i={S.infer} cls="ml-[7px]" />
        <Pn cls="ml-[4px] w-[156px]"><C i={S.ortho} w="w-[56px]" /><C i={S.polar} w="w-[64px]" /><Tri w="w-[36px]" /></Pn>
        <Blue i={S.iso} cls="ml-[6px]" />
        <Blue i={S.osnap} cls="ml-[3px]" />
        <Pn cls="w-[40px]"><Tri w="w-[40px]" /></Pn>
        <Blue i={S.lw} cls="ml-[4px]" />
        <Blue i={S.trans} cls="ml-[4px]" />
        <Pn cls="ml-[4px] w-[58px]"><C i={S.sel} /></Pn>
        <Pn cls="ml-[2px] w-[101px]"><C i={S.cube} w="w-[62px]" /><Tri w="w-[39px]" /></Pn>
        <Blue i={S.ucs} cls="ml-[7px]" />
        <Pn cls="ml-[2px] w-[101px]"><C i={S.gizmo} w="w-[56px]" /><Tri w="w-[45px]" /></Pn>
        <Blue i={S.annoA} cls="ml-[6px]" />
        <Blue i={S.annoB} cls="ml-[3px]" />
        <Pn cls="ml-[2px] w-[241px] text-[#e0e2e5]"><C i={S.annoC} /><span className="ml-[15px] w-[128px] whitespace-nowrap text-[26px]">1:1 / 100%</span><Tri w="w-[40px]" /></Pn>
        <Pn cls="ml-[7px] w-[99px]"><C i={S.gear} w="w-[60px]" /><Tri w="w-[39px]" /></Pn>
        <Pn cls="ml-[3px] w-[60px]"><C i={S.plus} w="w-[60px]" /></Pn>
        <Pn cls="ml-[6px] w-[240px] text-[#d8dadd]"><C i={S.ruler} /><span className="ml-[14px]">小数</span><Tri w="w-[36px]" cls="ml-auto" /></Pn>
        <Pn cls="ml-[3px] w-[61px]"><C i={S.panel} w="w-[61px]" /></Pn>
        <Pn cls="ml-[6px] w-[101px]"><C i={S.lockUi} w="w-[64px]" /><Tri w="w-[37px]" /></Pn>
        <Blue i={S.isolate} cls="ml-[6px]" />
        <Pn cls="ml-[7px] w-[9px]" />
        <Pn cls="ml-[5px] w-[60px]"><C i={S.full} w="w-[60px]" /></Pn>
        <Pn cls="ml-[5px] w-[57px]"><C i={S.burger} w="w-[57px]" /></Pn>
      </div>
      <div className="absolute left-[539px] bottom-0 w-[124px] h-[5px] bg-[#5a5f66]" />
    </div>
  );
}

export default function App() {
  return (
    <div className="relative flex flex-col w-[3840px] h-[2160px] overflow-hidden bg-[#222933] font-['Noto_Sans','Noto_Sans_CJK_SC',sans-serif]">
      <TitleBar />
      <MenuBar />
      <TabBar />
      <Toolbars />
      <Middle />
      <div className="h-[11px] bg-[#3b4453] shrink-0" />
      <CommandLine />
      <div className="h-[11px] bg-[#3b4453] shrink-0" />
      <StatusBar />
      {/* cursor highlight */}
      <div className="absolute left-[3534px] top-[114px] w-[146px] h-[146px] rounded-full bg-[#a0a000]/50" />
      <svg viewBox="0 0 24 40" className="absolute left-[3608px] top-[186px] w-[24px] h-[40px]">
        <path d="M1 1v30l7-6 5 13 5-2-5-13h9z" fill="#fff" stroke="#000" strokeWidth="1.5" />
      </svg>
    </div>
  );
}
